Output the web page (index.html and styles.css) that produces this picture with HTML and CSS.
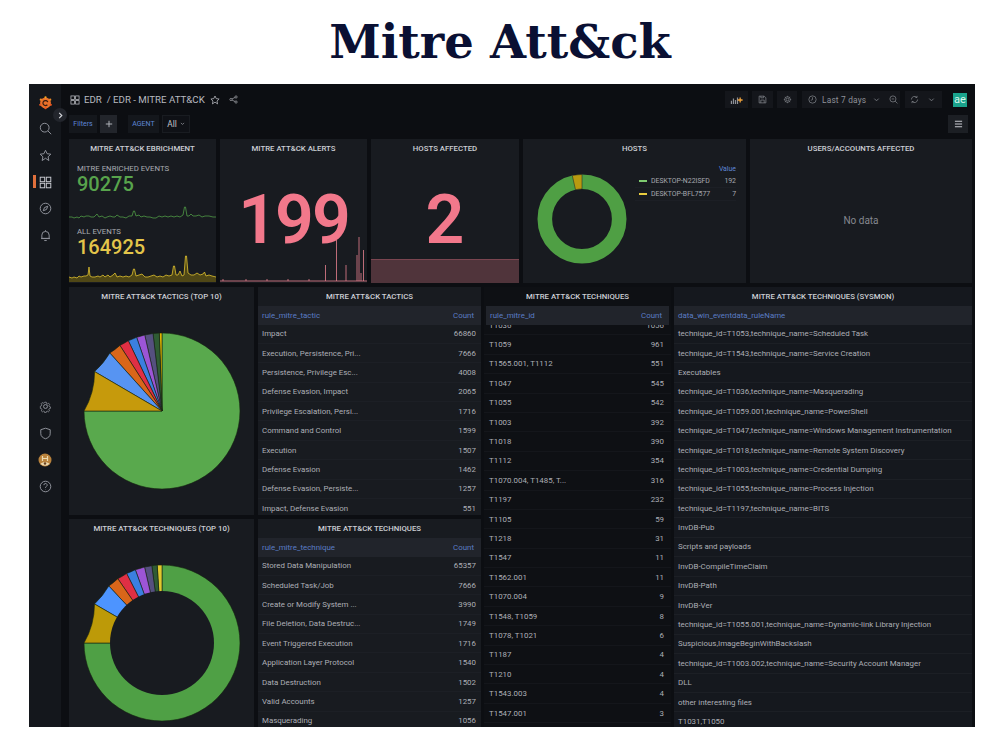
FILE: index.html
```html
<!DOCTYPE html>
<html lang="en">
<head>
<meta charset="utf-8">
<title>Mitre Att&amp;ck</title>
<link rel="stylesheet" href="styles.css">
</head>
<body>
<h1 class="page-title">Mitre Att&amp;ck</h1>
<div class="dash">
  <nav class="sidebar">
    <div class="side-item"><svg class="ico-logo" viewBox="0 0 16 16"><circle cx="8" cy="8.500" r="5.800" fill="#e8702a"/><circle cx="8" cy="2.600" r="1.200" fill="#f5a623"/><circle cx="3" cy="5" r="1.200" fill="#f08a24"/><circle cx="13" cy="5" r="1.200" fill="#f08a24"/><circle cx="2.400" cy="10.500" r="1.200" fill="#e8551f"/><circle cx="13.600" cy="10.500" r="1.200" fill="#e8551f"/><circle cx="8" cy="14" r="1.200" fill="#e8551f"/><path d="M10.500 7.600A2.700 2.700 0 1 0 10 10.400" fill="none" stroke="#3a1d10" stroke-width="1.300"/></svg></div>
    <div class="side-item"><svg class="ico" viewBox="0 0 16 16"><circle cx="7" cy="7" r="5.400"/><path d="M11 11l4 4"/></svg></div>
    <div class="side-item"><svg class="ico" viewBox="0 0 16 16"><path d="M8 1.600l2 4.200 4.600.6-3.400 3.200.9 4.600L8 11.400l-4.100 2.800.9-4.600L1.400 6.400 6 5.800z"/></svg></div>
    <div class="side-item side-active"><span class="active-bar"></span><svg class="ico ico-light" viewBox="0 0 16 16"><rect x="1.500" y="1.500" width="5.500" height="5.500"/><rect x="9" y="1.500" width="5.500" height="5.500"/><rect x="1.500" y="9" width="5.500" height="5.500"/><rect x="9" y="9" width="5.500" height="5.500"/></svg></div>
    <div class="side-item"><svg class="ico" viewBox="0 0 16 16"><circle cx="8" cy="8" r="6.500"/><path d="M10.800 5.200L9.200 9.200 5.200 10.800 6.800 6.800z"/></svg></div>
    <div class="side-item"><svg class="ico" viewBox="0 0 16 16"><path d="M3.500 11.500V7.500a4.500 4.500 0 0 1 9 0v4zM2.500 11.800h11M6.500 14.200h3M8 1.500v1.500"/></svg></div>
    <div class="side-gap"></div>
    <div class="side-item"><svg class="ico" viewBox="0 0 16 16"><circle cx="8" cy="8" r="2.400"/><path d="M6.800 1.500h2.400l.4 1.900 1.500.7 1.700-1 1.500 1.700-1 1.600.5 1.600 1.700.6v2.300l-1.800.5-.6 1.500 1 1.700-1.700 1.500-1.600-1-1.500.6-.4 1.800H6.800l-.4-1.800-1.500-.6-1.600 1-1.700-1.500 1-1.700-.6-1.500-1.800-.5V7.600l1.700-.6.5-1.600-1-1.600 1.500-1.700 1.700 1 1.500-.7z" transform="translate(1.500 1.500) scale(.81)"/></svg></div>
    <div class="side-item"><svg class="ico" viewBox="0 0 16 16"><path d="M8 1.500l5.800 1.800v5c0 3.200-2.500 5-5.800 6.200-3.300-1.200-5.800-3-5.800-6.200v-5z"/></svg></div>
    <div class="side-item"><svg class="ico-avatar" viewBox="0 0 14 14"><circle cx="7" cy="7" r="6.500" fill="#b9823c"/><path d="M4.500 3v5M9.500 3v5M4.500 5.500h5" stroke="#ecd9b0" stroke-width="1.200"/><path d="M2.500 11c1-2.500 8-2.500 9 0a6.500 6.500 0 0 1-9 0z" fill="#ecd9b0"/><circle cx="7" cy="10.500" r="1.200" fill="#6b4320"/></svg></div>
    <div class="side-item"><svg class="ico" viewBox="0 0 16 16"><circle cx="8" cy="8" r="6.500"/><path d="M6 6.300a2 2 0 1 1 3 1.700c-.7.400-1 .8-1 1.600M8 11.300v.4"/></svg></div>
    <span class="expand"><svg class="ico-chev" viewBox="0 0 8 8"><path d="M2.500 1l3 3-3 3"/></svg></span>
  </nav>
  <main class="main">
    <header class="topbar">
      <div class="crumbs">
        <svg class="ico ico-crumb" viewBox="0 0 16 16"><rect x="1.500" y="1.500" width="5.500" height="5.500"/><rect x="9" y="1.500" width="5.500" height="5.500"/><rect x="1.500" y="9" width="5.500" height="5.500"/><rect x="9" y="9" width="5.500" height="5.500"/></svg>
        <span class="crumb-text">EDR&nbsp; / EDR - MITRE ATT&amp;CK</span>
        <svg class="ico ico-crumb-star" viewBox="0 0 16 16"><path d="M8 1.600l2 4.200 4.600.6-3.400 3.200.9 4.600L8 11.400l-4.100 2.800.9-4.600L1.400 6.400 6 5.800z"/></svg>
        <svg class="ico ico-crumb-share" viewBox="0 0 16 16"><circle cx="3.500" cy="8" r="2"/><circle cx="12.500" cy="3.500" r="2"/><circle cx="12.500" cy="12.500" r="2"/><path d="M5.300 7l5.400-2.600M5.300 9l5.400 2.600"/></svg>
      </div>
      <div class="tools">
        <span class="tool tool-add"><svg class="ico-add" viewBox="0 0 16 12"><path d="M1 11V7h1.500v4zM3.500 11V4H5v7zM6 11V6h1.500v5zM8.500 11V3H10v8z" fill="#8e9198"/><path d="M12.500 3v6M9.500 6h6" stroke="#f0a33c" stroke-width="1.600"/></svg></span>
        <span class="tool tool-save"><svg class="ico ico-tool" viewBox="0 0 16 16"><path d="M2 2h9l3 3v9H2zM5 14V9h6v5M5 2v3h5V2"/></svg></span>
        <span class="tool tool-gear"><svg class="ico ico-tool" viewBox="0 0 16 16"><circle cx="8" cy="8" r="2.400"/><circle cx="8" cy="8" r="5"/><path d="M8 1.500v1.500M8 13v1.500M1.500 8H3M13 8h1.500M3.400 3.400l1 1M11.600 11.600l1 1M3.400 12.600l1-1M11.600 4.400l1-1"/></svg></span>
        <span class="tool tool-time">
          <svg class="ico ico-tool" viewBox="0 0 16 16"><circle cx="8" cy="8" r="6.500"/><path d="M8 4v4.200l-3 1.300"/></svg>
          <span class="time-label">Last 7 days</span>
          <svg class="ico-caret" viewBox="0 0 8 8"><path d="M1.500 3l2.500 2.500L6.500 3"/></svg>
          <svg class="ico ico-tool ico-zoom" viewBox="0 0 16 16"><circle cx="7" cy="7" r="5.400"/><path d="M11 11l4 4M4.800 7h4.400"/></svg>
        </span>
        <span class="tool tool-refresh">
          <svg class="ico ico-tool" viewBox="0 0 16 16"><path d="M2.500 8a5.500 5.500 0 0 1 9.500-3.800M13.500 8A5.500 5.500 0 0 1 4 11.800M12.500 1.500V4.500H9.500M3.500 14.500v-3h3"/></svg>
          <svg class="ico-caret" viewBox="0 0 8 8"><path d="M1.500 3l2.500 2.500L6.500 3"/></svg>
        </span>
        <span class="avatar">ae</span>
      </div>
    </header>
    <div class="filters">
      <span class="flt flt-label">Filters</span>
      <span class="flt flt-plus"><svg class="ico ico-plus" viewBox="0 0 10 10"><path d="M5 1v8M1 5h8"/></svg></span>
      <span class="flt flt-label flt-agent">AGENT</span>
      <span class="flt flt-all">All <svg class="ico-caret ico-caret-sm" viewBox="0 0 8 8"><path d="M1.500 3l2.500 2.500L6.500 3"/></svg></span>
      <span class="flt flt-menu"><svg class="ico ico-menu" viewBox="0 0 10 8"><path d="M1 1h8M1 4h8M1 7h8"/></svg></span>
    </div>

    <section class="row-top">
      <article class="panel w147">
        <h2 class="ptitle">MITRE ATT&amp;CK EBRICHMENT</h2>
        <div class="mini mini-green">
          <div class="mini-label">MITRE ENRICHED EVENTS</div>
          <div class="mini-value val-green">90275</div>
          <svg class="spark spark-green" viewBox="0 0 147 20" preserveAspectRatio="none"><polyline points="0,13 3,13 5,14 8,13 10,14 12,12 15,13 17,12 20,12 22,13 25,13 28,10 30,13 33,12 36,14 38,13 41,12 44,13 46,13 48,11 51,13 54,13 57,14 60,12 63,12 64.500,7 65.500,7 67,12 70,11 72,13 75,12 78,13 81,13 84,14 87,14 90,12 93,13 96,12 99,13 102,12 105,13 108,12 111,13 114,11 115.500,3 116.500,3 118,12 120,12 122,10 124,12 127,12 130,11 133,13 136,12 140,12 144,13 147,13"/></svg>
        </div>
        <div class="mini mini-yellow">
          <div class="mini-label">ALL EVENTS</div>
          <div class="mini-value val-yellow">164925</div>
          <svg class="spark spark-yellow" viewBox="0 0 147 27" preserveAspectRatio="none"><polygon class="spark-fill" points="0,27 0,22 3,23 5,22 8,23 10,21 12,22 15,21 17,21 19,20 20,12 21,21 23,22 26,22 29,21 31,22 34,20 36,22 39,20 41,22 44,20 46,18 48,22 51,21 54,22 57,21 60,22 63,20 64.500,14 65.500,14 67,21 70,20 73,19 76,22 79,22 82,21 85,20 88,22 91,21 94,22 97,20 100,21 103,20 104.500,11 105.500,11 107,20 109,20 111,16 113,21 115,20 116.500,1 117.500,1 119,18 122,20 125,20 128,18 131,20 134,19 135.500,17 137,21 140,20 143,21 147,22 147,27"/><polyline points="0,22 3,23 5,22 8,23 10,21 12,22 15,21 17,21 19,20 20,12 21,21 23,22 26,22 29,21 31,22 34,20 36,22 39,20 41,22 44,20 46,18 48,22 51,21 54,22 57,21 60,22 63,20 64.500,14 65.500,14 67,21 70,20 73,19 76,22 79,22 82,21 85,20 88,22 91,21 94,22 97,20 100,21 103,20 104.500,11 105.500,11 107,20 109,20 111,16 113,21 115,20 116.500,1 117.500,1 119,18 122,20 125,20 128,18 131,20 134,19 135.500,17 137,21 140,20 143,21 147,22"/></svg>
        </div>
      </article>
      <article class="panel w147 stat">
        <h2 class="ptitle">MITRE ATT&amp;CK ALERTS</h2>
        <div class="big big-wide">199</div>
        <svg class="stat-spark" viewBox="0 0 147 48"><path class="spark-red" d="M0 46H147M105.500 46V30M116.500 46V5M126 46V30M139 46V2M143.500 46V15M137 46V20M141 46V38M3 46V44M26 46V44M47 46V44M68 46V44M89 46V44"/></svg>
      </article>
      <article class="panel w148 stat">
        <h2 class="ptitle">HOSTS AFFECTED</h2>
        <div class="big">2</div>
        <div class="stat-bar"></div>
      </article>
      <article class="panel w223">
        <h2 class="ptitle">HOSTS</h2>
        <div class="hosts">
          <svg class="host-donut" viewBox="-45 -45 90 90"><circle class="ring-green" r="37.200"/><path class="ring-gold" d="M-9.700-43.400A44.500 44.500 0 0 1 0-44.500V-30A30 30 0 0 0-6.500-29.300Z"/></svg>
          <div class="legend">
            <div class="leg-head">Value</div>
            <div class="leg-row"><span class="leg-mark mark-green"></span><span class="leg-name">DESKTOP-N22ISFD</span><span class="leg-val">192</span></div>
            <div class="leg-row"><span class="leg-mark mark-yellow"></span><span class="leg-name">DESKTOP-BFL7577</span><span class="leg-val">7</span></div>
          </div>
        </div>
      </article>
      <article class="panel w222">
        <h2 class="ptitle">USERS/ACCOUNTS AFFECTED</h2>
        <div class="nodata">No data</div>
      </article>
    </section>

    <section class="row-bottom">
      <div class="left-stack">
        <div class="left-row">
          <article class="panel w185">
            <h2 class="ptitle">MITRE ATT&amp;CK TACTICS (TOP 10)</h2>
            <div class="pie-wrap">
              <svg class="pie" viewBox="-79 -79 158 158">
                <path fill="#59a94d" d="M0 0L-78 0A78 78 0 1 0 0-78Z"/>
                <path fill="#e0b400" d="M0 0L-2.700-78A78 78 0 0 0 0-78Z"/>
                <path fill="#2f5b34" d="M0 0L-9-77.500A78 78 0 0 0-2.700-78Z"/>
                <path fill="#55507f" d="M0 0L-17.300-76.100A78 78 0 0 0-9-77.500Z"/>
                <path fill="#9c55d6" d="M0 0L-25.400-73.700A78 78 0 0 0-17.300-76.100Z"/>
                <path fill="#3b7fe0" d="M0 0L-33.700-70.300A78 78 0 0 0-25.400-73.700Z"/>
                <path fill="#e02f44" d="M0 0L-42.100-65.600A78 78 0 0 0-33.700-70.300Z"/>
                <path fill="#d9661a" d="M0 0L-52.200-58A78 78 0 0 0-42.100-65.600Z"/>
                <path fill="#5794f2" d="M0 0L-67.400-39.400A78 78 0 0 0-52.200-58Z"/>
                <path fill="#c69a0c" d="M0 0L-78 0A78 78 0 0 0-67.400-39.400Z"/>
              </svg>
            </div>
          </article>
          <article class="panel w223">
            <h2 class="ptitle">MITRE ATT&amp;CK TACTICS</h2>
            <div class="thead"><span>rule_mitre_tactic</span><span class="th-count">Count</span></div>
            <div class="trow"><span>Impact</span><span>66860</span></div>
            <div class="trow"><span>Execution, Persistence, Pri...</span><span>7666</span></div>
            <div class="trow"><span>Persistence, Privilege Esc...</span><span>4008</span></div>
            <div class="trow"><span>Defense Evasion, Impact</span><span>2065</span></div>
            <div class="trow"><span>Privilege Escalation, Persi...</span><span>1716</span></div>
            <div class="trow"><span>Command and Control</span><span>1599</span></div>
            <div class="trow"><span>Execution</span><span>1507</span></div>
            <div class="trow"><span>Defense Evasion</span><span>1462</span></div>
            <div class="trow"><span>Defense Evasion, Persiste...</span><span>1257</span></div>
            <div class="trow"><span>Impact, Defense Evasion</span><span>551</span></div>
          </article>
        </div>
        <div class="left-row">
          <article class="panel w185">
            <h2 class="ptitle">MITRE ATT&amp;CK TECHNIQUES (TOP 10)</h2>
            <div class="pie-wrap">
              <svg class="pie" viewBox="-79 -79 158 158">
                <path fill="#4fa045" d="M0 0L-78 0A78 78 0 1 0 0-78Z"/>
                <path fill="#e0c82e" d="M0 0L-4.800-77.900A78 78 0 0 0 0-78Z"/>
                <path fill="#2f5b34" d="M0 0L-10.200-77.300A78 78 0 0 0-4.800-77.900Z"/>
                <path fill="#55507f" d="M0 0L-17.500-76A78 78 0 0 0-10.200-77.300Z"/>
                <path fill="#9c55d6" d="M0 0L-26.700-73.300A78 78 0 0 0-17.500-76Z"/>
                <path fill="#3b7fe0" d="M0 0L-35.400-69.500A78 78 0 0 0-26.700-73.300Z"/>
                <path fill="#e02f44" d="M0 0L-44.200-64.300A78 78 0 0 0-35.400-69.500Z"/>
                <path fill="#d9661a" d="M0 0L-53.200-57A78 78 0 0 0-44.200-64.300Z"/>
                <path fill="#4d94ff" d="M0 0L-67.500-39A78 78 0 0 0-53.200-57Z"/>
                <path fill="#bd9a08" d="M0 0L-78 0A78 78 0 0 0-67.500-39Z"/>
                <circle class="pie-hole" r="52"/>
              </svg>
            </div>
          </article>
          <article class="panel w223">
            <h2 class="ptitle">MITRE ATT&amp;CK TECHNIQUES</h2>
            <div class="thead"><span>rule_mitre_technique</span><span class="th-count">Count</span></div>
            <div class="trow"><span>Stored Data Manipulation</span><span>65357</span></div>
            <div class="trow"><span>Scheduled Task/Job</span><span>7666</span></div>
            <div class="trow"><span>Create or Modify System ...</span><span>3990</span></div>
            <div class="trow"><span>File Deletion, Data Destruc...</span><span>1749</span></div>
            <div class="trow"><span>Event Triggered Execution</span><span>1716</span></div>
            <div class="trow"><span>Application Layer Protocol</span><span>1540</span></div>
            <div class="trow"><span>Data Destruction</span><span>1502</span></div>
            <div class="trow"><span>Valid Accounts</span><span>1257</span></div>
            <div class="trow"><span>Masquerading</span><span>1056</span></div>
          </article>
        </div>
      </div>
      <article class="panel panel-dark w187">
        <h2 class="ptitle">MITRE ATT&amp;CK TECHNIQUES</h2>
        <div class="thead thead-inset"><span>rule_mitre_id</span><span class="th-count">Count</span></div>
        <div class="tscroll">
          <div class="tscroll-inner">
            <div class="trow"><span>T1036</span><span>1056</span></div>
            <div class="trow"><span>T1059</span><span>961</span></div>
            <div class="trow"><span>T1565.001, T1112</span><span>551</span></div>
            <div class="trow"><span>T1047</span><span>545</span></div>
            <div class="trow"><span>T1055</span><span>542</span></div>
            <div class="trow"><span>T1003</span><span>392</span></div>
            <div class="trow"><span>T1018</span><span>390</span></div>
            <div class="trow"><span>T1112</span><span>354</span></div>
            <div class="trow"><span>T1070.004, T1485, T...</span><span>316</span></div>
            <div class="trow"><span>T1197</span><span>232</span></div>
            <div class="trow"><span>T1105</span><span>59</span></div>
            <div class="trow"><span>T1218</span><span>31</span></div>
            <div class="trow"><span>T1547</span><span>11</span></div>
            <div class="trow"><span>T1562.001</span><span>11</span></div>
            <div class="trow"><span>T1070.004</span><span>9</span></div>
            <div class="trow"><span>T1548, T1059</span><span>8</span></div>
            <div class="trow"><span>T1078, T1021</span><span>6</span></div>
            <div class="trow"><span>T1187</span><span>4</span></div>
            <div class="trow"><span>T1210</span><span>4</span></div>
            <div class="trow"><span>T1543.003</span><span>4</span></div>
            <div class="trow"><span>T1547.001</span><span>3</span></div>
          </div>
        </div>
      </article>
      <article class="panel panel-mid w298">
        <h2 class="ptitle">MITRE ATT&amp;CK TECHNIQUES (SYSMON)</h2>
        <div class="thead"><span>data_win_eventdata_ruleName</span></div>
        <div class="trow"><span>technique_id=T1053,technique_name=Scheduled Task</span></div>
        <div class="trow"><span>technique_id=T1543,technique_name=Service Creation</span></div>
        <div class="trow"><span>Executables</span></div>
        <div class="trow"><span>technique_id=T1036,technique_name=Masquerading</span></div>
        <div class="trow"><span>technique_id=T1059.001,technique_name=PowerShell</span></div>
        <div class="trow"><span>technique_id=T1047,technique_name=Windows Management Instrumentation</span></div>
        <div class="trow"><span>technique_id=T1018,technique_name=Remote System Discovery</span></div>
        <div class="trow"><span>technique_id=T1003,technique_name=Credential Dumping</span></div>
        <div class="trow"><span>technique_id=T1055,technique_name=Process Injection</span></div>
        <div class="trow"><span>technique_id=T1197,technique_name=BITS</span></div>
        <div class="trow"><span>InvDB-Pub</span></div>
        <div class="trow"><span>Scripts and payloads</span></div>
        <div class="trow"><span>InvDB-CompileTimeClaim</span></div>
        <div class="trow"><span>InvDB-Path</span></div>
        <div class="trow"><span>InvDB-Ver</span></div>
        <div class="trow"><span>technique_id=T1055.001,technique_name=Dynamic-link Library Injection</span></div>
        <div class="trow"><span>Suspicious,ImageBeginWithBackslash</span></div>
        <div class="trow"><span>technique_id=T1003.002,technique_name=Security Account Manager</span></div>
        <div class="trow"><span>DLL</span></div>
        <div class="trow"><span>other interesting files</span></div>
        <div class="trow"><span>T1031,T1050</span></div>
      </article>
    </section>
  </main>
</div>
</body>
</html>
```
FILE: styles.css
```css
* { box-sizing: border-box; }
html, body { margin: 0; padding: 0; background: #fff; }
body { width: 1000px; height: 750px; overflow: hidden; font-family: Roboto, "Liberation Sans", sans-serif; }

.page-title {
  margin: 0; height: 84px; line-height: 84px; text-align: center;
  font-family: "DejaVu Serif", serif; font-weight: 700; font-size: 46.500px; color: #0a1033;
}

.dash { margin-left: 29px; width: 946px; height: 643px; display: flex; overflow: hidden; background: #0c0e12; color: #c4c6cc; }

.sidebar { position: relative; width: 32px; flex: none; padding-top: 5px; background: #14171c; display: flex; flex-direction: column; align-items: center; }
.side-item { position: relative; width: 32px; height: 26.600px; flex: none; display: flex; align-items: center; justify-content: center; }
.side-gap { height: 145px; flex: none; }
.active-bar { position: absolute; left: 4px; top: 6px; width: 2.500px; height: 13.500px; background: #e0703c; }
.ico { fill: none; stroke: #90939b; stroke-width: 1.200; width: 13px; height: 13px; flex: none; }
.ico-light { stroke: #c8cad0; }
.ico-logo { width: 15px; height: 15px; }
.ico-avatar { width: 14px; height: 14px; }
.expand { position: absolute; left: 24px; top: 24px; width: 14px; height: 14px; border-radius: 50%; background: #22252c; display: flex; align-items: center; justify-content: center; }
.ico-chev { width: 7px; height: 7px; fill: none; stroke: #d5d7dc; stroke-width: 1.300; }

.main { flex: 1; min-width: 0; padding: 0 3px 0 8px; }

.topbar { height: 31px; padding-top: 7px; display: flex; justify-content: space-between; align-items: flex-start; }
.crumbs { height: 17px; padding-left: 1px; display: flex; align-items: center; }
.ico-crumb { width: 10px; height: 10px; stroke: #c0c2c8; }
.crumb-text { margin-left: 4px; font-size: 9.700px; color: #b8bac0; white-space: nowrap; }
.ico-crumb-star { width: 10px; height: 10px; margin-left: 5px; stroke: #c0c2c8; }
.ico-crumb-share { width: 9px; height: 9px; margin-left: 9px; stroke: #aeb0b6; }

.tools { display: flex; align-items: center; height: 17px; margin-right: 5px; }
.tool { height: 17px; background: #14161b; display: flex; align-items: center; justify-content: center; flex: none; }
.ico-tool { width: 9px; height: 9px; stroke: #8a8d94; }
.tool-add { width: 23px; }
.ico-add { width: 13px; height: 10px; }
.tool-save { width: 21px; margin-left: 4px; }
.tool-gear { width: 20px; margin-left: 4px; }
.tool-time { width: 98px; margin-left: 5px; padding-left: 6px; justify-content: flex-start; }
.time-label { margin-left: 5px; font-size: 8.300px; letter-spacing: .2px; color: #8f9299; white-space: nowrap; }
.ico-caret { width: 7px; height: 7px; margin-left: 7px; fill: none; stroke: #7c7f86; stroke-width: 1; flex: none; }
.ico-zoom { margin-left: 9px; }
.tool-refresh { width: 37px; margin-left: 5px; padding-left: 5px; justify-content: flex-start; }
.tool-refresh .ico-caret { margin-left: 9px; }
.avatar { width: 14px; height: 14px; margin-left: 11px; background: #1aa38c; color: #d8f5ea; font-size: 11px; line-height: 13px; text-align: center; flex: none; }

.filters { height: 24px; display: flex; align-items: flex-start; }
.flt { height: 17.500px; display: flex; align-items: center; justify-content: center; flex: none; }
.flt-label { width: 28px; background: #14171c; color: #5e86d6; font-size: 7px; }
.flt-plus { width: 17px; margin-left: 3px; background: #22252b; }
.ico-plus { width: 8px; height: 8px; stroke: #b5b7bd; }
.flt-agent { width: 31px; margin-left: 11px; }
.flt-all { width: 28px; margin-left: 3px; background: #0f1116; border: 1px solid #191c21; font-size: 8.300px; color: #c0c2c8; gap: 2px; }
.ico-caret-sm { width: 5px; height: 5px; margin-left: 1px; stroke: #b0b2b8; }
.flt-menu { width: 20px; margin-left: auto; margin-right: 4px; background: #1c1f24; }
.ico-menu { width: 9px; height: 8px; stroke: #c8cad0; }

.row-top { height: 144px; display: flex; gap: 4px; }
.row-bottom { margin-top: 4px; display: flex; gap: 3px; }
.left-stack { flex: none; display: flex; flex-direction: column; gap: 4px; }
.left-row { height: 228px; display: flex; gap: 4px; }
.w147 { width: 147px; }
.w148 { width: 148px; }
.w185 { width: 185px; }
.w187 { width: 187px; }
.w222 { width: 222px; }
.w223 { width: 223px; }
.w298 { width: 298px; }

.panel { position: relative; flex: none; background: #181b20; display: flex; flex-direction: column; min-height: 0; overflow: hidden; }
.row-bottom > .panel { height: 459px; }
.panel-dark { background: #0e1014; }
.panel-mid { background: #15181e; }
.ptitle { margin: 0; height: 19px; flex: none; line-height: 19px; text-align: center; font-size: 7.800px; font-weight: 500; color: #cdcfd5; white-space: nowrap; }

.mini { display: flex; flex-direction: column; padding-left: 8px; }
.mini-green { height: 66px; padding-top: 6px; }
.mini-yellow { height: 59px; padding-top: 3px; }
.mini-label { font-size: 7.800px; line-height: 10px; color: #a9abb2; white-space: nowrap; }
.mini-value { font-size: 20px; font-weight: 500; line-height: 21px; }
.val-green { color: #58a44c; }
.val-yellow { color: #e3c54a; }
.spark { display: block; width: 147px; margin-left: -8px; flex: none; fill: none; }
.spark-green { height: 20px; margin-top: auto; stroke: #4f9a45; stroke-width: .8; }
.spark-yellow { height: 27px; margin-top: -3px; stroke: #e0c22f; stroke-width: .8; }
.spark-fill { fill: #4f4716; stroke: none; }

.stat { align-items: center; }
.big { margin-top: 27px; font-size: 68px; line-height: 70px; font-weight: 600; color: #f2788b; }
.big-wide { letter-spacing: -2px; }
.stat-spark { position: absolute; left: 0; bottom: 0; width: 147px; height: 48px; fill: none; }
.spark-red { stroke: #e8828f; stroke-width: .8; }
.stat-bar { position: absolute; left: 0; right: 0; bottom: 0; height: 24px; background: #50343b; border-top: 1px solid #7a4550; }

.hosts { flex: 1; display: flex; padding: 0 10px 0 14px; }
.host-donut { width: 90px; height: 90px; margin-top: 16px; flex: none; }
.ring-green { fill: none; stroke: #4f9f44; stroke-width: 14.600; }
.ring-gold { fill: #b99a10; stroke: #181b20; stroke-width: .5; }
.legend { margin-left: 8px; padding-top: 5px; flex: 1; font-size: 6.900px; }
.leg-head { height: 12.500px; padding-top: 2px; line-height: 9px; text-align: right; color: #5e86d6; }
.leg-row { height: 12.700px; display: flex; align-items: center; border-bottom: 1px solid #1c1f25; color: #a6a8af; }
.leg-mark { width: 8px; height: 1.800px; margin: 0 4px 0 4px; flex: none; }
.mark-green { background: #7ecb70; }
.mark-yellow { background: #e8cc3e; }
.leg-name { flex: 1; white-space: nowrap; }
.leg-val { flex: none; }

.nodata { flex: 1; display: flex; align-items: center; justify-content: center; font-size: 10px; color: #85888f; }

.pie-wrap { flex: 1; min-height: 0; display: flex; align-items: center; justify-content: center; }
.pie { width: 158px; height: 158px; flex: none; }
.pie path { stroke: #14240f; stroke-width: .6; }
.pie-hole { fill: #181b20; }

.thead { height: 18.500px; padding: 0 7px 0 4px; flex: none; display: flex; justify-content: space-between; align-items: center; background: #21242b; font-size: 7.900px; color: #5b7cc4; position: relative; z-index: 1; }
.thead-inset { margin: 0 2px; }
.th-count { color: #5b7cc4; }
.trow { height: 19.400px; padding: 0 5px 0 4px; flex: none; display: flex; justify-content: space-between; align-items: center; border-bottom: 1px solid #1c1f25; font-size: 7.900px; color: #adafb6; white-space: nowrap; }
.panel-dark .trow { border-bottom-color: #14161b; padding: 0 7px 0 5px; }
.panel-mid .trow, .panel-mid .thead { padding-left: 4px; }
.tscroll { flex: 1; min-height: 0; overflow: hidden; }
.tscroll-inner { margin-top: -8.500px; }
```
